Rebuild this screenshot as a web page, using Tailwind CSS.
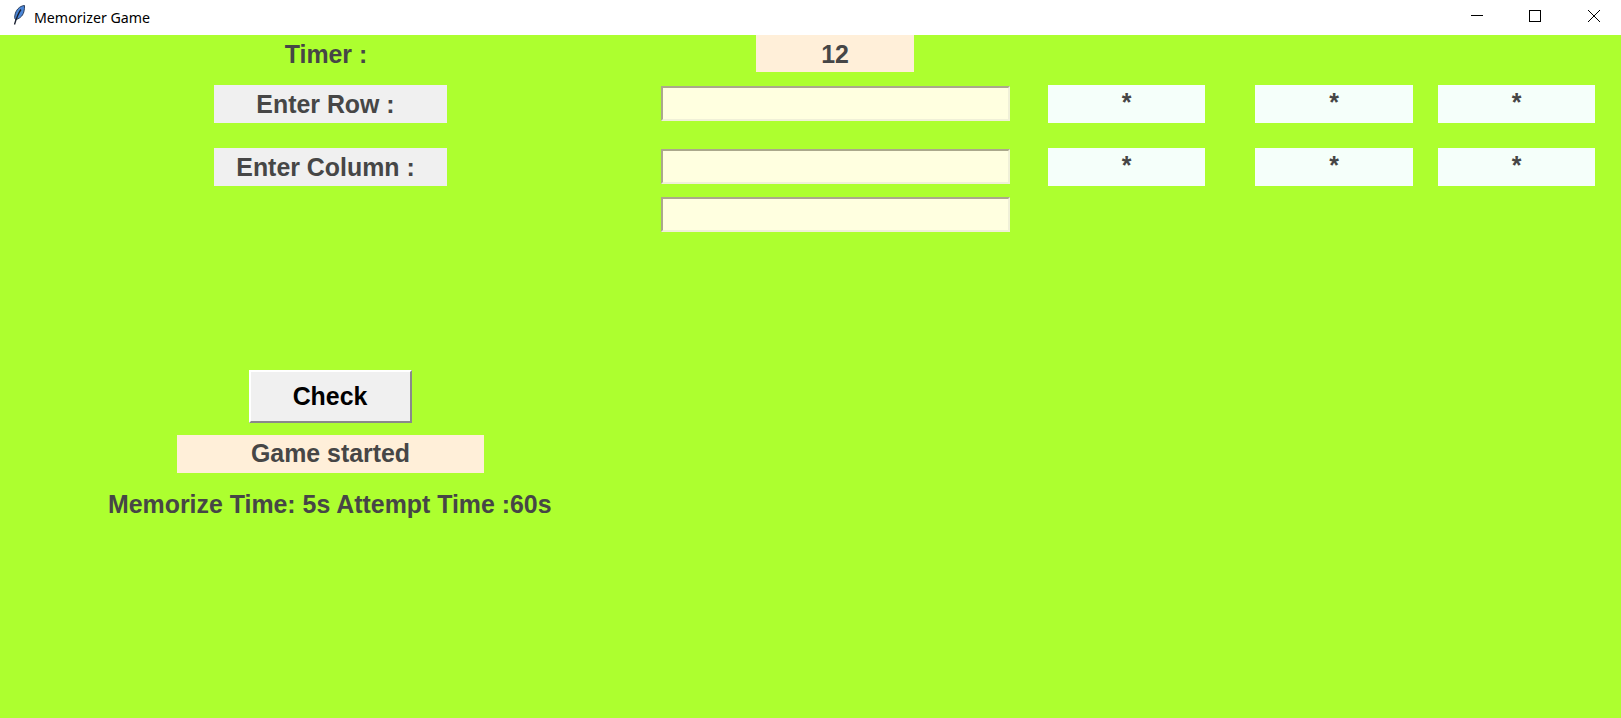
<!DOCTYPE html>
<html lang="en">
<head>
  <meta charset="UTF-8" />
  <title>Memorizer Game</title>
  <script src="https://cdn.jsdelivr.net/npm/@tailwindcss/browser@4"></script>
</head>
<body class="flex flex-col h-screen w-screen overflow-hidden bg-[#adff2f] font-['Liberation_Sans',Arial,sans-serif]">

  <!-- barra de titulo -->
  <div class="flex items-center h-[35px] bg-white">
    <svg class="ml-[12px] mb-[5px] w-[14px] h-[20px]" viewBox="0 0 14 20">
      <path d="M12.500 .5C7.500 1 3.500 5 2.800 11c-.2 1.500 0 3 .7 3.500 3.500-.5 7-3 8.300-7.500.6-2.200.8-4.300.7-6.500z" fill="#4a86d8" stroke="#2c3e5c" stroke-width="1"/>
      <path d="M9 4.500C6.500 8 4.500 12.500 2.500 19.500" fill="none" stroke="#1a2030" stroke-width="1.300"/>
    </svg>
    <span class="ml-[8px] text-[14.2px] text-black font-['Noto_Sans',sans-serif]">Memorizer Game</span>
    <div class="ml-auto flex items-center h-full text-black">
      <svg class="w-[58px] h-[35px]" viewBox="0 0 58 35"><path d="M24 15.500h12" stroke="#000" stroke-width="1"/></svg>
      <svg class="w-[58px] h-[35px]" viewBox="0 0 58 35"><rect x="24.500" y="10.500" width="11" height="11" fill="none" stroke="#000" stroke-width="1"/></svg>
      <svg class="w-[58px] h-[35px]" viewBox="0 0 58 35"><path d="M25 10l12 12M37 10L25 22" stroke="#000" stroke-width="1"/></svg>
    </div>
  </div>

  <!-- contenido -->
  <div class="grid grid-cols-[660px_388px_207px_183px_157px] grid-rows-[50px_63px_49px_173px_65px_55px_45px] text-[24.9px] font-bold text-[#464646]">

    <div class="text-center leading-[38px] pr-[8px]">Timer :</div>
    <div class="col-span-4 ml-[96px] w-[158px] h-[37px] bg-[#ffefd9] text-center leading-[38px]">12</div>

    <div class="ml-[214px] w-[233px] h-[38px] bg-[#f0f0f0] text-center leading-[38px] pr-[10px]">Enter Row :</div>
    <input class="ml-[1px] w-[349px] h-[35px] mt-px bg-[#ffffe0] border-2 border-t-[#aba88c] border-l-[#aba88c] border-r-[#f0f0d8] border-b-[#f0f0d8]" />
    <div class="w-[157px] h-[38px] bg-[#f5fffa] text-center leading-[35px]">*</div>
    <div class="w-[158px] h-[38px] bg-[#f5fffa] text-center leading-[35px]">*</div>
    <div class="w-[157px] h-[38px] bg-[#f5fffa] text-center leading-[35px]">*</div>

    <div class="ml-[214px] w-[233px] h-[38px] bg-[#f0f0f0] text-center leading-[38px] pr-[10px]">Enter Column :</div>
    <input class="ml-[1px] w-[349px] h-[35px] mt-px bg-[#ffffe0] border-2 border-t-[#aba88c] border-l-[#aba88c] border-r-[#f0f0d8] border-b-[#f0f0d8]" />
    <div class="w-[157px] h-[38px] bg-[#f5fffa] text-center leading-[35px]">*</div>
    <div class="w-[158px] h-[38px] bg-[#f5fffa] text-center leading-[35px]">*</div>
    <div class="w-[157px] h-[38px] bg-[#f5fffa] text-center leading-[35px]">*</div>

    <div></div>
    <input class="col-span-4 ml-[1px] w-[349px] h-[35px] bg-[#ffffe0] border-2 border-t-[#aba88c] border-l-[#aba88c] border-r-[#f0f0d8] border-b-[#f0f0d8]" />

    <div class="col-span-5 row-start-5 ml-[249px] w-[163px] h-[53px] bg-[#f0f0f0] text-black text-center leading-[49px] pr-[1px] border-2 border-t-white border-l-white border-r-[#8a8a8a] border-b-[#8a8a8a]">Check</div>

    <div class="col-span-5 row-start-6 ml-[177px] w-[307px] h-[38px] bg-[#ffefd9] text-center leading-[37px]">Game started</div>

    <div class="col-span-5 row-start-7 ml-[108px] whitespace-nowrap leading-[28px]">Memorize Time: 5s Attempt Time :60s</div>
  </div>

</body>
</html>
